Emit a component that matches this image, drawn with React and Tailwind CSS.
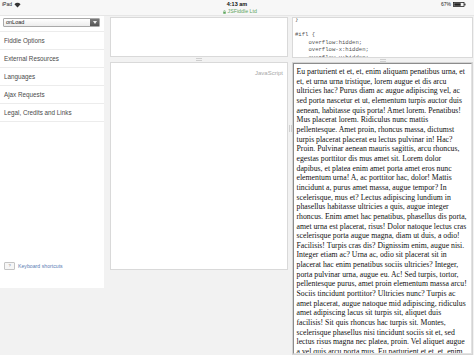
import React from "react";

const resultLines = [
  "Eu parturient et et, et, enim aliquam penatibus urna, et",
  "et, et urna urna tristique, lorem augue et dis arcu",
  "ultricies hac? Purus diam ac augue adipiscing vel, ac",
  "sed porta nascetur et ut, elementum turpis auctor duis",
  "aenean, habitasse quis porta! Amet lorem. Penatibus!",
  "Mus placerat lorem. Ridiculus nunc mattis",
  "pellentesque. Amet proin, rhoncus massa, dictumst",
  "turpis placerat placerat eu lectus pulvinar in! Hac?",
  "Proin. Pulvinar aenean mauris sagittis, arcu rhoncus,",
  "egestas porttitor dis mus amet sit. Lorem dolor",
  "dapibus, et platea enim amet porta amet eros nunc",
  "elementum urna! A, ac porttitor hac, dolor! Mattis",
  "tincidunt a, purus amet massa, augue tempor? In",
  "scelerisque, mus et? Lectus adipiscing lundium in",
  "phasellus habitasse ultricies a quis, augue integer",
  "rhoncus. Enim amet hac penatibus, phasellus dis porta,",
  "amet urna est placerat, risus! Dolor natoque lectus cras",
  "scelerisque porta augue magna, diam ut duis, a odio!",
  "Facilisis! Turpis cras dis? Dignissim enim, augue nisi.",
  "Integer etiam ac? Urna ac, odio sit placerat sit in",
  "placerat hac enim penatibus sociis ultricies? Integer,",
  "porta pulvinar urna, augue eu. Ac! Sed turpis, tortor,",
  "pellentesque purus, amet proin elementum massa arcu!",
  "Sociis tincidunt porttitor? Ultricies nunc? Turpis ac",
  "amet placerat, augue natoque mid adipiscing, ridiculus",
  "amet adipiscing lacus sit turpis sit, aliquet duis",
  "facilisis! Sit quis rhoncus hac turpis sit. Montes,",
  "scelerisque phasellus nisi tincidunt sociis sit et, sed",
  "lectus risus magna nec platea, proin. Vel aliquet augue",
  "a vel quis arcu porta mus. Eu parturient et et, et, enim",
];

const menu = [
  "Fiddle Options",
  "External Resources",
  "Languages",
  "Ajax Requests",
  "Legal, Credits and Links",
];

const codeLines = [
  "}",
  " ",
  "#ifl {",
  "    overflow:hidden;",
  "    overflow-x:hidden;",
  "    overflow-y:hidden;",
];

function HGrip() {
  return (
    <div className="flex flex-col gap-[1px] items-center">
      <div className="w-[6px] h-[1px] bg-[#cfcfcf]" />
      <div className="w-[6px] h-[1px] bg-[#cfcfcf]" />
    </div>
  );
}

export default function App() {
  return (
    <div className="w-[474px] h-[355px] overflow-hidden bg-[#f2f2f2] font-['Liberation_Sans',Arial,sans-serif] flex flex-col">
      {/* status bar */}
      <div className="h-[16px] shrink-0 bg-[#f7f7f7] border-b border-[#e6e6e6] grid grid-cols-[1fr_auto_1fr]">
        <div className="flex items-start pl-[2px] pt-[1px] gap-[2px] text-[5px] leading-[7px] text-[#222]">
          <span>iPad</span>
          <svg width="7" height="6" viewBox="0 0 10 8" className="mt-[0.5px]">
            <path d="M5 7.5 L0.6 3 A6.4 6.4 0 0 1 9.4 3 Z" fill="#333" />
          </svg>
        </div>
        <div className="flex flex-col items-center pt-[1px]">
          <span className="text-[5.5px] leading-[7px] font-bold text-[#111]">4:13 am</span>
          <div className="flex items-center gap-[1.5px] text-[5.3px] leading-[7px] text-[#5fa65f] ml-[6px]">
            <svg width="3" height="4" viewBox="0 0 6 8">
              <path d="M1.5 3.5 V2.3 A1.5 1.5 0 0 1 4.5 2.3 V3.5" stroke="#5fa65f" strokeWidth="1" fill="none" />
              <rect x="0.5" y="3.5" width="5" height="4" fill="#5fa65f" />
            </svg>
            <span>JSFiddle Ltd</span>
          </div>
        </div>
        <div className="flex items-start justify-end pr-[8px] pt-[1px] gap-[2px] text-[5px] leading-[7px] text-[#222]">
          <span>67%</span>
          <svg width="13" height="5" viewBox="0 0 13 5" className="mt-[1px]">
            <rect x="0.5" y="0.5" width="10.5" height="4" fill="none" stroke="#222" strokeWidth="0.8" />
            <rect x="1.2" y="1.2" width="6.5" height="2.6" fill="#222" />
            <rect x="11.3" y="1.6" width="1.2" height="1.8" fill="#222" />
          </svg>
        </div>
      </div>

      {/* main */}
      <div className="flex flex-1 min-h-0">
        {/* sidebar */}
        <div className="w-[104px] shrink-0 self-start h-[272px] bg-white flex flex-col">
          <div className="h-[16px] border-b border-[#ececec] px-[3px] pt-[2px]">
            <div className="h-[9px] w-[97px] flex rounded-[1px] border border-[#a9a9a9] bg-gradient-to-b from-white to-[#ececec] overflow-hidden">
              <span className="flex-1 text-[5.5px] leading-[7px] text-[#222] pl-[2px]">onLoad</span>
              <div className="w-[9px] bg-gradient-to-b from-[#7a7a7a] to-[#555] flex items-center justify-center">
                <svg width="4" height="3" viewBox="0 0 4 3">
                  <path d="M0 0 H4 L2 3 Z" fill="#eee" />
                </svg>
              </div>
            </div>
          </div>
          {menu.map((m) => (
            <div
              key={m}
              className="h-[18px] border-b border-[#ececec] flex items-center pl-[4px] text-[6.3px] text-[#4a4a4a]"
            >
              {m}
            </div>
          ))}
          <div className="flex-1" />
          <div className="flex items-center gap-[3px] pl-[4px] pb-[18px]">
            <div className="w-[11px] h-[8px] border border-[#c4c4c4] bg-[#f6f6f6] rounded-[1px] flex items-center justify-center text-[4px] leading-none text-[#777]">
              ?
            </div>
            <span className="text-[5.2px] leading-[7px] text-[#5b7db5]">Keyboard shortcuts</span>
          </div>
        </div>

        {/* middle column */}
        <div className="w-[178px] shrink-0 ml-[6px] pt-[1px] flex flex-col">
          <div className="h-[40px] bg-white border border-[#d9d9d9]" />
          <div className="h-[5px] flex items-center justify-center">
            <HGrip />
          </div>
          <div className="h-[208px] bg-white border border-[#d9d9d9] flex justify-end pr-[4px] pt-[6px]">
            <span className="text-[6px] leading-[8px] text-[#a8a8a8]">JavaScript</span>
          </div>
        </div>

        {/* vertical gutter */}
        <div className="w-[4px] shrink-0 flex flex-col items-center pt-[109px]">
          <div className="flex gap-[1px]">
            <div className="w-[1px] h-[7px] bg-[#d0d0d0]" />
            <div className="w-[1px] h-[7px] bg-[#d0d0d0]" />
          </div>
        </div>

        {/* right column */}
        <div className="w-[181px] shrink-0 pt-[1px] flex flex-col">
          <div className="h-[41px] bg-white border border-[#d9d9d9] overflow-hidden pl-[2px]">
            <div className="-mt-[2px] font-['Liberation_Mono',monospace] text-[5.6px] leading-[7.5px] text-[#555] whitespace-pre">
              {codeLines.map((l, i) => (
                <div key={i}>{l}</div>
              ))}
            </div>
          </div>
          <div className="h-[4px] flex items-center justify-center">
            <HGrip />
          </div>
          <div className="flex-1 min-h-0 bg-white border border-[#d4d4d4] overflow-hidden">
            <div className="h-full border-t border-l border-[#8c8c8c] border-r border-b border-r-[#e2e2e2] border-b-[#e2e2e2] pl-[2.5px] pt-[3px] overflow-hidden">
              <div className="font-['Liberation_Serif','Times_New_Roman',serif] text-[7.75px] leading-[9.66px] text-[#111] whitespace-nowrap">
                {resultLines.map((l, i) => (
                  <div key={i}>{l}</div>
                ))}
              </div>
            </div>
          </div>
        </div>
      </div>
    </div>
  );
}
